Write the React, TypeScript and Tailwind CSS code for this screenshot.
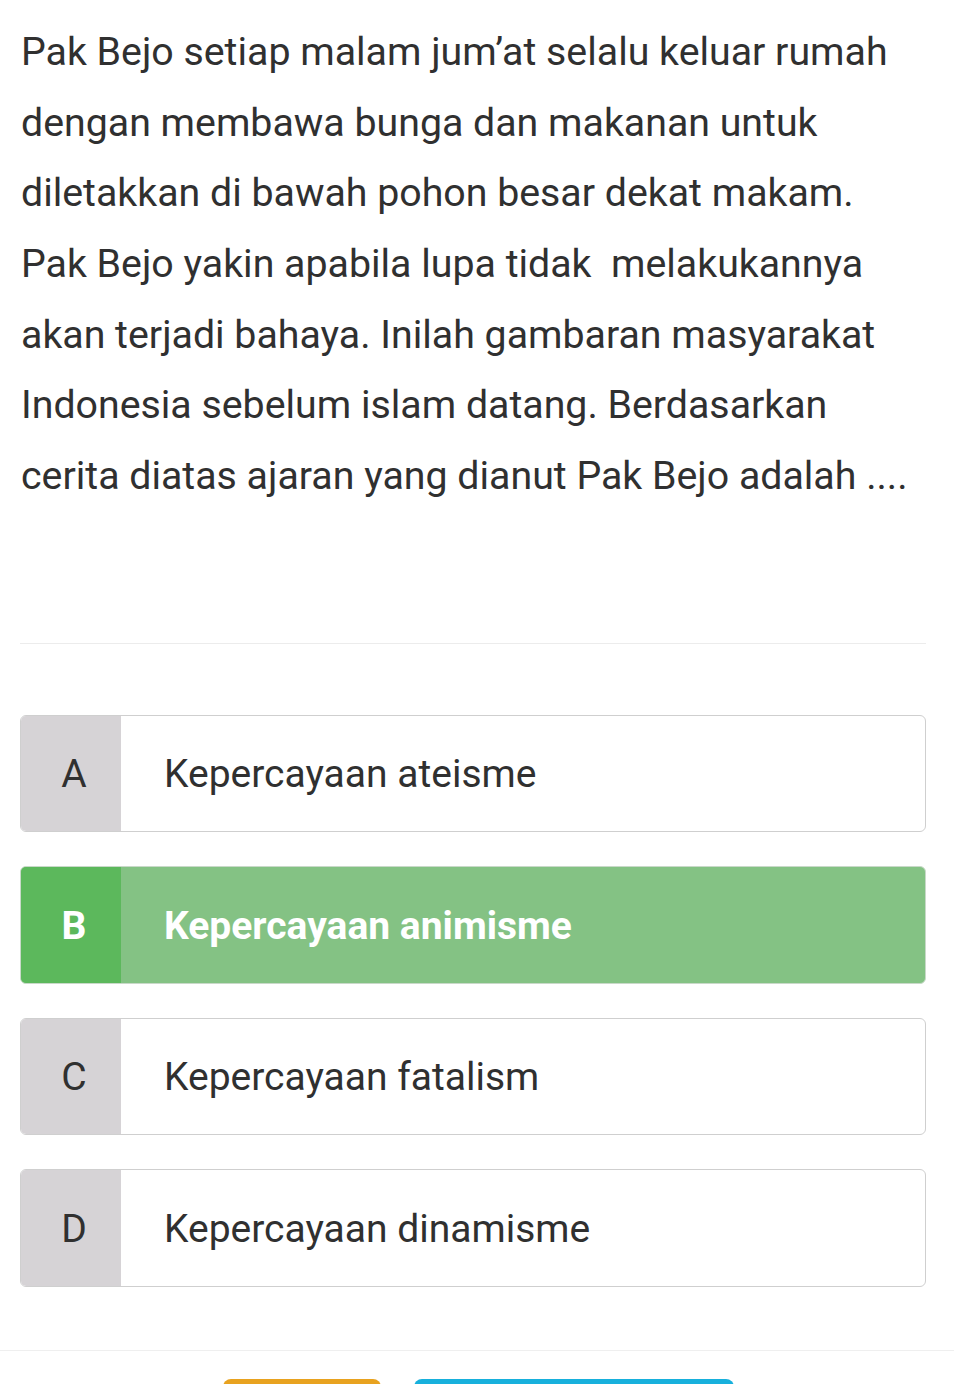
import React from "react";

const lines = [
  "Pak Bejo setiap malam jum\u2019at selalu keluar rumah",
  "dengan membawa bunga dan makanan untuk",
  "diletakkan di bawah pohon besar dekat makam.",
  "Pak Bejo yakin apabila lupa tidak  melakukannya",
  "akan terjadi bahaya. Inilah gambaran masyarakat",
  "Indonesia sebelum islam datang. Berdasarkan",
  "cerita diatas ajaran yang dianut Pak Bejo adalah ....",
];

const options = [
  { l: "A", t: "Kepercayaan ateisme", sel: false },
  { l: "B", t: "Kepercayaan animisme", sel: true },
  { l: "C", t: "Kepercayaan fatalism", sel: false },
  { l: "D", t: "Kepercayaan dinamisme", sel: false },
];

export default function App() {
  return (
    <div
      className="w-[954px] h-[1384px] overflow-hidden bg-white text-[#303030]"
      style={{ fontFamily: "Roboto, 'Noto Sans', sans-serif" }}
    >
      <div className="px-[21px] pt-[17px] text-[39.3px] leading-[70.67px]">
        {lines.map((s, i) => (
          <div key={i} className="whitespace-pre">
            {s}
          </div>
        ))}
      </div>
      <div className="h-[131px]" />
      <div className="ml-[20px] mr-[28px] border-t border-[#ececec]" />
      <div className="ml-[20px] mr-[28px] mt-[71px] flex flex-col gap-[34px]">
        {options.map((o) => (
          <div
            key={o.l}
            className={
              "flex h-[117.5px] overflow-hidden rounded-[6px] border " +
              (o.sel ? "border-[#c9d9c9] bg-[#84c284]" : "border-[#cfcfcf] bg-white")
            }
          >
            <div
              className={
                "flex w-[100px] shrink-0 items-center justify-center pl-[6px] pt-[2px] text-[39px] " +
                (o.sel ? "bg-[#5cb85c] font-bold text-white" : "bg-[#d6d3d6] text-[#303030]")
              }
            >
              {o.l}
            </div>
            <div
              className={
                "flex items-center pl-[43px] pt-[2px] text-[39px] " +
                (o.sel ? "font-bold text-white" : "text-[#303030]")
              }
            >
              {o.t}
            </div>
          </div>
        ))}
      </div>
      <div className="mt-[63px] border-t border-[#efefef]" />
      <div className="mt-[28px] flex justify-center gap-[33px] pl-[2px]">
        <div className="h-[20px] w-[158px] rounded-[8px] bg-[#e8a21f]" />
        <div className="h-[20px] w-[320px] rounded-[8px] bg-[#17b0dc]" />
      </div>
    </div>
  );
}
